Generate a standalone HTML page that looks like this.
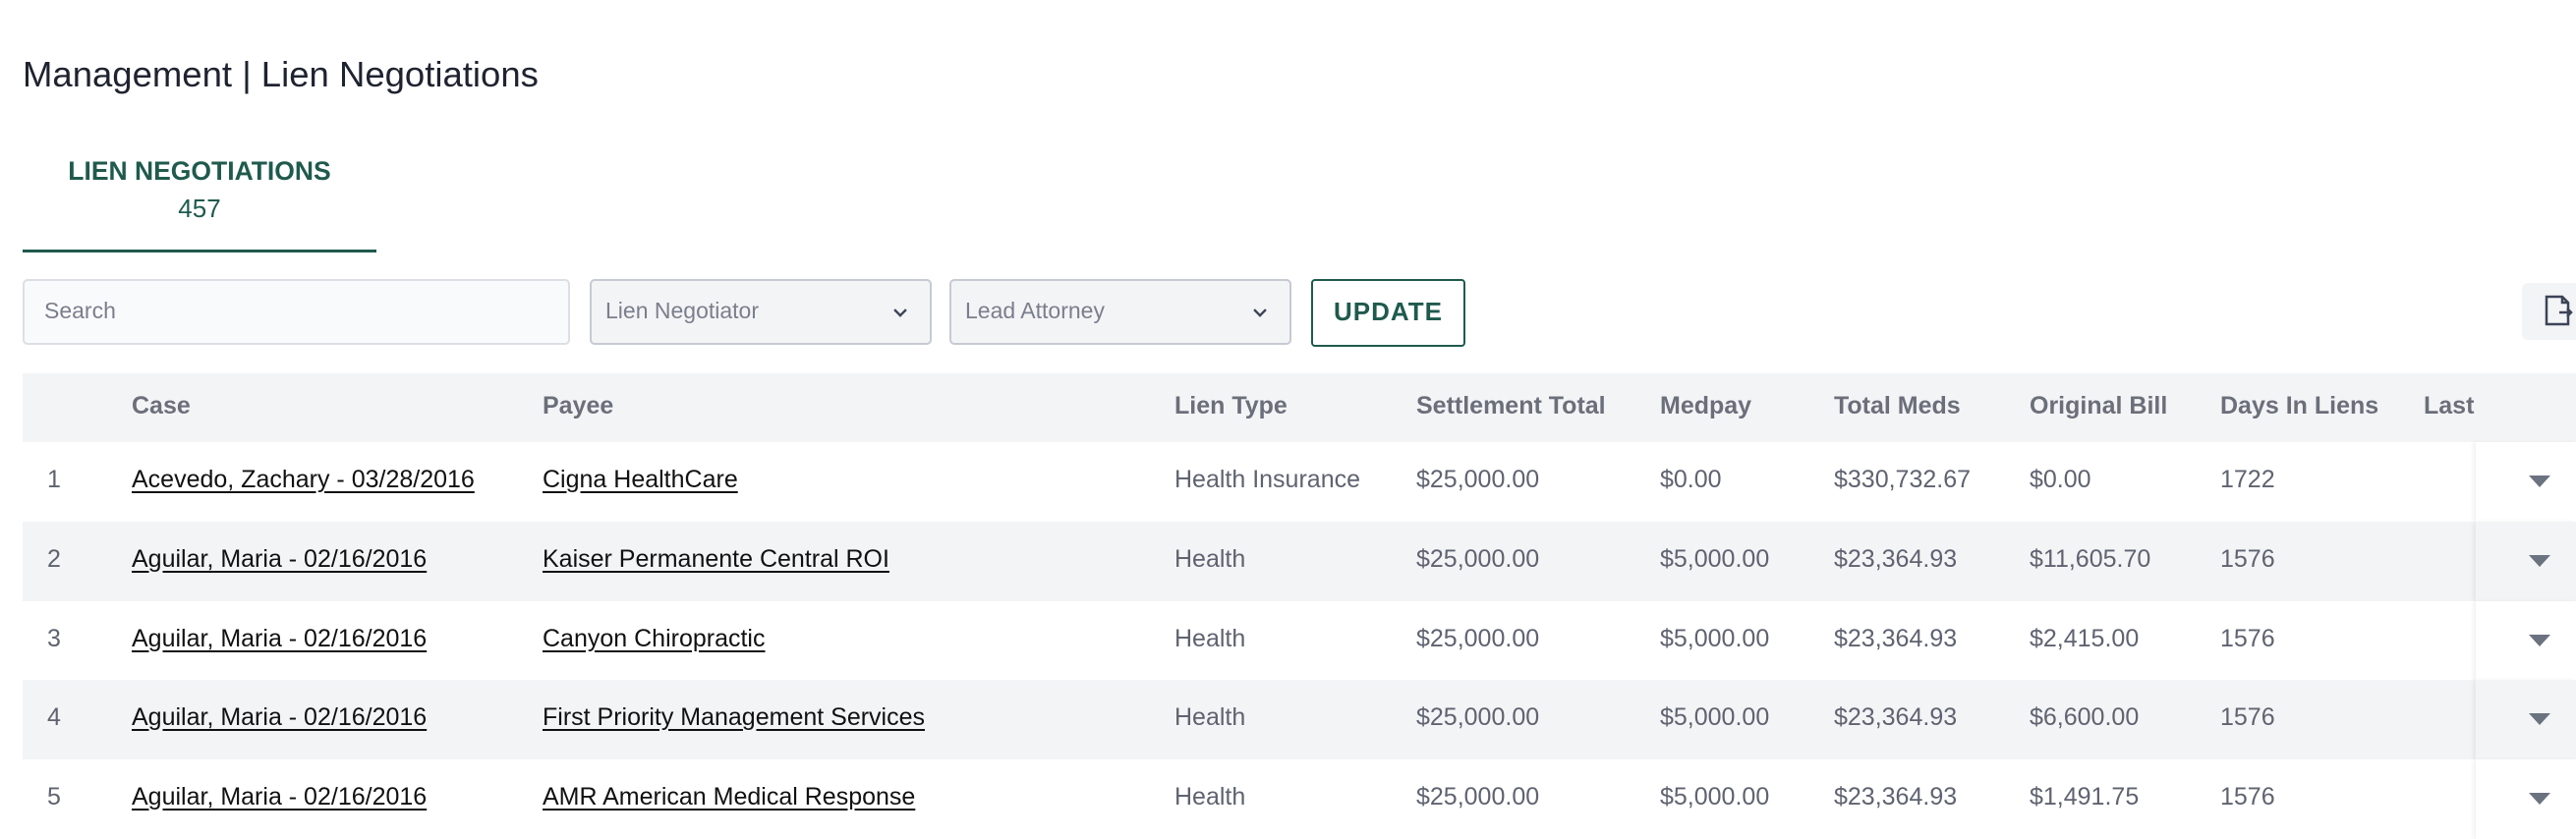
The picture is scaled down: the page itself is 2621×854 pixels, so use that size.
<!DOCTYPE html>
<html><head><meta charset="utf-8"><style>
*{box-sizing:border-box;margin:0;padding:0}
body{width:2621px;height:848px;overflow:hidden;background:#fff;font-family:"Liberation Sans",sans-serif;position:relative;color:#5f6370}
.a{position:absolute;white-space:nowrap}
.title{left:23px;top:55px;font-size:36.5px;color:#1f2330;line-height:42px}
.tab{left:23px;top:158px;width:360px;text-align:center;color:#1f5a4d;font-size:26.5px;font-weight:bold;line-height:32px}
.cnt{left:23px;top:196px;width:360px;text-align:center;color:#1f5a4d;font-size:26px;line-height:32px}
.uline{left:23px;top:254px;width:360px;height:3px;background:#1f5a4d}
.box{top:284px;height:67px;border:2px solid #dcdfe5;border-radius:5px;background:#f9fafb;font-size:23px;color:#7a7f8c;line-height:61px;padding-left:20px}
.sel{background:#f3f4f6;border-color:#c5cad4;padding-left:14px}
.chev{position:absolute;right:24px;top:24px;width:12px;height:12px;border-right:3px solid #3d4357;border-bottom:3px solid #3d4357;transform:rotate(45deg) scale(.8)}
.btn{left:1334px;top:284px;width:157px;height:69px;border:2px solid #1f5a4d;border-radius:4px;color:#1f5a4d;font-weight:bold;font-size:26px;text-align:center;line-height:63px;letter-spacing:1px}
.exp{left:2566px;top:288px;width:60px;height:58px;background:#f3f4f6;border-radius:6px}
.row{position:absolute;left:23px;width:2598px;height:81px}
.row .a{top:-2px;line-height:81px;font-size:25px}
.hdr .a{font-weight:bold;color:#6b6f7a;line-height:70px}
.lk{color:#111;text-decoration:underline;text-underline-offset:4px}
.stick{position:absolute;left:2496px;top:0;width:102px;height:100%;box-shadow:-3px 0 4px rgba(0,0,0,.05)}
.car{position:absolute;left:54px;top:34px;width:0;height:0;border-left:11px solid transparent;border-right:11px solid transparent;border-top:12px solid #6b7280}
</style></head><body>
<div class="a title">Management | Lien Negotiations</div>
<div class="a tab">LIEN NEGOTIATIONS</div>
<div class="a cnt">457</div>
<div class="a uline"></div>
<div class="a box" style="left:23px;width:557px">Search</div>
<div class="a box sel" style="left:600px;width:348px">Lien Negotiator<div class="chev"></div></div>
<div class="a box sel" style="left:966px;width:348px">Lead Attorney<div class="chev"></div></div>
<div class="a btn">UPDATE</div>
<div class="a exp"><svg width="40" height="40" viewBox="0 0 40 40" style="position:absolute;left:20px;top:10px" fill="none" stroke="#3d4357" stroke-width="2.5"><path d="M12 4h9l6 6v22H5V4h7M21 4v6h6"/><path d="M18 20h12M26 16l4 4-4 4"/></svg></div>

<div class="row hdr" style="top:380px;height:70px;background:#f3f4f6">
<div class="a" style="left:111px">Case</div><div class="a" style="left:529px">Payee</div><div class="a" style="left:1172px">Lien Type</div><div class="a" style="left:1418px">Settlement Total</div><div class="a" style="left:1666px">Medpay</div><div class="a" style="left:1843px">Total Meds</div><div class="a" style="left:2042px">Original Bill</div><div class="a" style="left:2236px">Days In Liens</div><div class="a" style="left:2443px">Last</div>
</div>

<div class="row" style="top:450px;background:#fff"><div class="a" style="left:25px">1</div><div class="a lk" style="left:111px">Acevedo, Zachary - 03/28/2016</div><div class="a lk" style="left:529px">Cigna HealthCare</div><div class="a" style="left:1172px">Health Insurance</div><div class="a" style="left:1418px">$25,000.00</div><div class="a" style="left:1666px">$0.00</div><div class="a" style="left:1843px">$330,732.67</div><div class="a" style="left:2042px">$0.00</div><div class="a" style="left:2236px">1722</div><div class="stick" style="background:#fff"><div class="car"></div></div></div>
<div class="row" style="top:531px;background:#f3f4f6"><div class="a" style="left:25px">2</div><div class="a lk" style="left:111px">Aguilar, Maria - 02/16/2016</div><div class="a lk" style="left:529px">Kaiser Permanente Central ROI</div><div class="a" style="left:1172px">Health</div><div class="a" style="left:1418px">$25,000.00</div><div class="a" style="left:1666px">$5,000.00</div><div class="a" style="left:1843px">$23,364.93</div><div class="a" style="left:2042px">$11,605.70</div><div class="a" style="left:2236px">1576</div><div class="stick" style="background:#f3f4f6"><div class="car"></div></div></div>
<div class="row" style="top:612px;background:#fff"><div class="a" style="left:25px">3</div><div class="a lk" style="left:111px">Aguilar, Maria - 02/16/2016</div><div class="a lk" style="left:529px">Canyon Chiropractic</div><div class="a" style="left:1172px">Health</div><div class="a" style="left:1418px">$25,000.00</div><div class="a" style="left:1666px">$5,000.00</div><div class="a" style="left:1843px">$23,364.93</div><div class="a" style="left:2042px">$2,415.00</div><div class="a" style="left:2236px">1576</div><div class="stick" style="background:#fff"><div class="car"></div></div></div>
<div class="row" style="top:692px;background:#f3f4f6"><div class="a" style="left:25px">4</div><div class="a lk" style="left:111px">Aguilar, Maria - 02/16/2016</div><div class="a lk" style="left:529px">First Priority Management Services</div><div class="a" style="left:1172px">Health</div><div class="a" style="left:1418px">$25,000.00</div><div class="a" style="left:1666px">$5,000.00</div><div class="a" style="left:1843px">$23,364.93</div><div class="a" style="left:2042px">$6,600.00</div><div class="a" style="left:2236px">1576</div><div class="stick" style="background:#f3f4f6"><div class="car"></div></div></div>
<div class="row" style="top:773px;background:#fff"><div class="a" style="left:25px">5</div><div class="a lk" style="left:111px">Aguilar, Maria - 02/16/2016</div><div class="a lk" style="left:529px">AMR American Medical Response</div><div class="a" style="left:1172px">Health</div><div class="a" style="left:1418px">$25,000.00</div><div class="a" style="left:1666px">$5,000.00</div><div class="a" style="left:1843px">$23,364.93</div><div class="a" style="left:2042px">$1,491.75</div><div class="a" style="left:2236px">1576</div><div class="stick" style="background:#fff"><div class="car"></div></div></div>
</body></html>
